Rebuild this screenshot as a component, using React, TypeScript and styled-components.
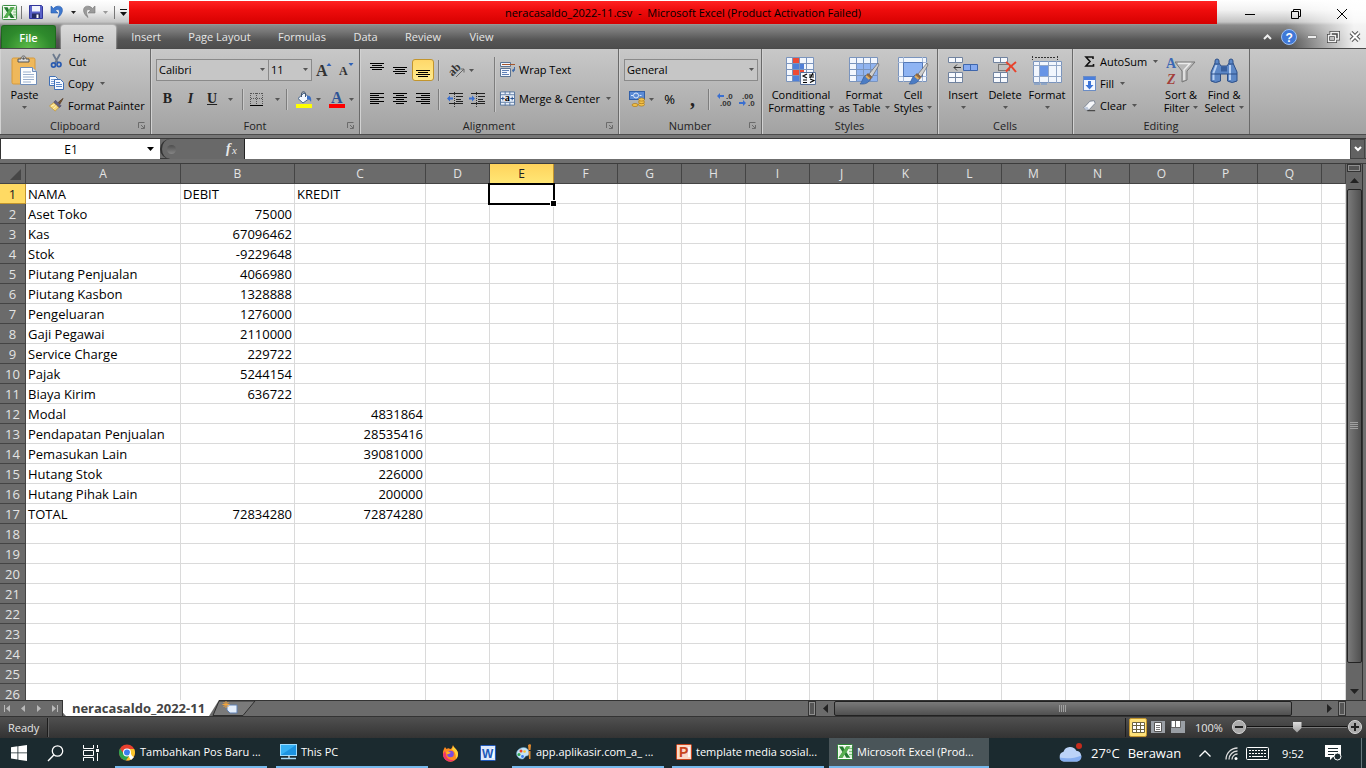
import React from "react";
import styled, { createGlobalStyle, css } from "styled-components";

const UI = `"Open Sans", "Noto Sans", sans-serif`;

const Global = createGlobalStyle`
  * { box-sizing: border-box; }
  body { margin: 0; background: #1b2a2f; }
  button, input, select { font: inherit; color: inherit; margin: 0; }
  button { border: 0; padding: 0; background: none; white-space: nowrap; }
  svg { display: block; flex: none; overflow: visible; }
`;

const Shell = styled.div`
  display: flex;
  flex-direction: column;
  height: 100vh;
  font: 11px/13px ${UI};
  color: #000;
  overflow: hidden;
`;

/* ---------- window header ---------- */

const Header = styled.header`
  flex: none;
  background:
    linear-gradient(to right, rgba(255, 255, 255, 0) calc(100% - 80px), rgba(255, 255, 255, 0.9) calc(100% - 12px)),
    linear-gradient(#fff 0, #f2f2f2 10px, #c4c4c4 22px, #8c8c8c 25px, #747474 32px, #555 40px, #4d4d4d 48px);
`;

const TitleBar = styled.div`
  display: flex;
  align-items: center;
  height: 24px;
`;

const QuickAccess = styled.div`
  display: flex;
  align-items: center;
  width: 129px;
  height: 24px;
  padding-left: 2px;
`;

const QuickButton = styled.button<{ $w: number }>`
  display: flex;
  align-items: center;
  justify-content: center;
  width: ${(p) => p.$w}px;
  height: 22px;
`;

const QuickRule = styled.span`
  width: 1px;
  height: 13px;
  margin: 0 4px;
  background: #777;
`;

const Caption = styled.h1`
  flex: 1;
  align-self: flex-end;
  margin: 0;
  height: 23px;
  padding-left: 20px;
  font-size: 11px;
  line-height: 24px;
  font-weight: 400;
  text-align: center;
  white-space: pre;
  background: linear-gradient(#ff2222, #ee0c0c 40%, #d60000);
`;

const WindowButtons = styled.div`
  display: flex;
  width: 149px;
  padding-left: 10px;
`;

const WindowButton = styled.button`
  display: flex;
  align-items: center;
  justify-content: center;
  width: 46px;
  height: 24px;
  padding-top: 4px;
`;

const TabRow = styled.div`
  display: flex;
  align-items: flex-end;
  height: 25px;
  padding-left: 1px;
  border-bottom: 1px solid #4a4a4a;
`;

const FileTab = styled.button`
  width: 55px;
  height: 23px;
  margin-right: 5px;
  border: 1px solid #1d6a1d;
  border-bottom: 0;
  border-radius: 3px 3px 0 0;
  color: #fff;
  font-weight: 600;
  background: radial-gradient(ellipse at 50% 100%, #5cbb48, #2e8a2c 60%, #277a28);
`;

const Tab = styled.button<{ $active?: boolean; $w: number }>`
  width: ${(p) => p.$w}px;
  height: 23px;
  color: #e6e6e6;
  ${(p) =>
    p.$active &&
    css`
      height: 24px;
      margin-bottom: -1px;
      color: #000;
      background: linear-gradient(#dadada, #c6c6c6);
      border-radius: 3px 3px 0 0;
      box-shadow: 0 0 2px #fff;
    `}
`;

const HeaderTools = styled.div`
  display: flex;
  align-items: center;
  gap: 9px;
  height: 23px;
  margin-left: auto;
  padding-right: 5px;
`;

/* ---------- ribbon ---------- */

const Ribbon = styled.div`
  flex: none;
  display: flex;
  height: 86px;
  background: linear-gradient(#c8c8c8, #bdbdbd 30%, #a2a2a2);
  border-bottom: 1px solid #4c4c4c;
`;

const GroupBox = styled.section<{ $w: number }>`
  display: flex;
  flex-direction: column;
  width: ${(p) => p.$w}px;
  padding-top: 2px;
  border-right: 1px solid #6a6a6a;
  box-shadow: inset 1px 0 #d2d2d2;
`;

const GroupBody = styled.div<{ $pad?: number }>`
  display: flex;
  height: 66px;
  padding-left: ${(p) => p.$pad ?? 0}px;
`;

const GroupTitle = styled.div`
  display: grid;
  grid-template-columns: 18px 1fr 18px;
  align-items: center;
  justify-items: center;
  height: 17px;
  padding-bottom: 1px;
  color: #222;
`;

const Column = styled.div<{ $pad?: number }>`
  display: flex;
  flex-direction: column;
  padding-top: ${(p) => p.$pad ?? 0}px;
`;

const ToolRow = styled.div<{ $gapTop?: number; $pad?: number }>`
  display: flex;
  align-items: center;
  height: 22px;
  margin-top: ${(p) => p.$gapTop ?? 0}px;
  padding-left: ${(p) => p.$pad ?? 0}px;
`;

const Tool = styled.button<{ $w: number; $active?: boolean }>`
  display: flex;
  align-items: center;
  justify-content: center;
  gap: 4px;
  width: ${(p) => p.$w}px;
  height: 22px;
  ${(p) =>
    p.$active &&
    css`
      border: 1px solid #c2952d;
      border-radius: 3px;
      background: linear-gradient(#ffd86b, #ffe27a 50%, #ffea91);
    `}
`;

const LabelTool = styled.button`
  display: flex;
  align-items: center;
  gap: 3px;
  height: 22px;
  padding-bottom: 2px;
  & > svg:first-child { margin-right: 1px; }
`;

const BigTool = styled.button<{ $w: number }>`
  display: flex;
  flex-direction: column;
  align-items: center;
  width: ${(p) => p.$w}px;
  padding-top: 3px;
  line-height: 13px;
`;

const BigArt = styled.span`
  display: flex;
  align-items: center;
  height: 34px;
`;

const BigLine = styled.span`
  display: flex;
  align-items: center;
  justify-content: center;
  gap: 4px;
  height: 13px;
`;

const Rule = styled.span<{ $h: number; $m?: number }>`
  width: 2px;
  height: ${(p) => p.$h}px;
  margin: 0 ${(p) => p.$m ?? 4}px;
  border-left: 1px solid #7d7d7d;
  border-right: 1px solid #c9c9c9;
`;

const Combo = styled.label<{ $w: number }>`
  position: relative;
  width: ${(p) => p.$w}px;
  height: 22px;
  margin-right: -1px;
  select {
    width: 100%;
    height: 22px;
    padding: 0 2px 2px;
    border: 1px solid #8a8a8a;
    border-radius: 0;
    background: #c6c6c6;
    appearance: none;
  }
  svg {
    position: absolute;
    right: 4px;
    top: 9px;
    pointer-events: none;
  }
`;

const Glyph = styled.span<{ $size: number; $bold?: boolean; $italic?: boolean; $underline?: boolean }>`
  font: ${(p) => (p.$italic ? "italic" : "normal")} ${(p) => (p.$bold ? 700 : 400)} ${(p) => p.$size}px/16px
    "Liberation Serif", serif;
  color: #222;
  text-decoration: ${(p) => (p.$underline ? "underline" : "none")};
`;

const Percent = styled.span`
  font-size: 13px;
`;

/* ---------- formula bar ---------- */

const FormulaBar = styled.div`
  flex: none;
  display: flex;
  height: 29px;
  padding: 4px 1px 4px 0;
  background: #6b6b6b;
  border-bottom: 1px solid #3c3c3c;
  box-shadow: inset 0 3px #767676, inset 0 4px #3a3a3a, inset 0 -4px #6f6f6f, inset 0 -5px #3a3a3a;
`;

const NameBox = styled.label`
  display: flex;
  align-items: center;
  width: 160px;
  height: 20px;
  padding-right: 6px;
  background: #fff;
  border-left: 1px solid #333;
  input {
    width: 140px;
    border: 0;
    outline: 0;
    padding: 1px 0 0;
    text-align: center;
    font: 12px/18px ${UI};
    background: none;
  }
  svg { margin-left: auto; }
`;

const FunctionZone = styled.div`
  display: flex;
  align-items: center;
  justify-content: space-between;
  width: 84px;
  height: 20px;
  padding: 0 6px 0 5px;
  border-left: 2px solid #333;
  border-radius: 10px 0 0 10px;
  background: #696969;
`;

const Knob = styled.span`
  width: 9px;
  height: 9px;
  border-radius: 50%;
  background: linear-gradient(#4e4e4e, #858585);
`;

const FormulaInput = styled.input`
  flex: 1;
  min-width: 0;
  height: 20px;
  border: 0;
  border-left: 1px solid #222;
  outline: 0;
  background: #fff;
`;

const Expand = styled.button`
  display: flex;
  align-items: center;
  justify-content: center;
  width: 15px;
  height: 20px;
  border: 1px solid #444;
  background: #626262;
`;

/* ---------- sheet ---------- */

const SheetArea = styled.main`
  flex: 1;
  display: flex;
  min-height: 0;
  background: #6b6b6b;
`;

const GridPane = styled.div`
  flex: 1;
  min-width: 0;
  overflow: hidden;
  background: #fff;
`;

const Grid = styled.table`
  width: 100%;
  table-layout: fixed;
  border-collapse: separate;
  border-spacing: 0;
  font: 13px/19px ${UI};
`;

const Corner = styled.th`
  height: 20px;
  padding: 0 4px 3px 0;
  background: #6b6b6b;
  border-right: 1px solid #444;
  border-bottom: 1px solid #444;
  vertical-align: bottom;
  svg { margin-left: auto; }
`;

const ColHead = styled.th<{ $active?: boolean }>`
  height: 20px;
  padding: 1px 0 0;
  font-size: 12px;
  line-height: 18px;
  font-weight: 400;
  color: ${(p) => (p.$active ? "#222" : "#e4e4e4")};
  background: ${(p) => (p.$active ? "linear-gradient(#ffd35c, #ffe675)" : "#6b6b6b")};
  border-right: 1px solid ${(p) => (p.$active ? "#c2952d" : "#444")};
  border-bottom: 1px solid ${(p) => (p.$active ? "#c2952d" : "#444")};
`;

const RowHead = styled.th<{ $active?: boolean }>`
  height: 20px;
  padding: 1px 0 0;
  font-weight: 400;
  line-height: 18px;
  color: ${(p) => (p.$active ? "#222" : "#e4e4e4")};
  background: ${(p) => (p.$active ? "#ffda63" : "#6b6b6b")};
  border-right: 1px solid ${(p) => (p.$active ? "#c2952d" : "#444")};
  border-bottom: 1px solid ${(p) => (p.$active ? "#c2952d" : "#444")};
`;

const Cell = styled.td<{ $num?: boolean }>`
  position: relative;
  height: 20px;
  padding: 1px 2px 0;
  line-height: 18px;
  text-align: ${(p) => (p.$num ? "right" : "left")};
  white-space: nowrap;
  border-right: 1px solid #dadada;
  border-bottom: 1px solid #dadada;
`;

const Cursor = styled.span`
  position: absolute;
  z-index: 1;
  inset: -1px -2px -2px -2px;
  border: 2px solid #000;
  &::after {
    content: "";
    position: absolute;
    right: -3px;
    bottom: -3px;
    width: 5px;
    height: 5px;
    background: #000;
    box-shadow: 0 0 0 1px #fff;
  }
`;

const VScroll = styled.div`
  display: flex;
  flex-direction: column;
  align-items: center;
  width: 20px;
  background: linear-gradient(to right, #666 16px, #333 16px, #333 17px, #6f6f6f 17px);
  padding-right: 4px;
`;

const SplitHandle = styled.span<{ $vertical?: boolean }>`
  flex: none;
  width: ${(p) => (p.$vertical ? 8 : 14)}px;
  height: ${(p) => (p.$vertical ? 15 : 8)}px;
  border: 2px solid #8f8f8f;
  outline: 1px solid #333;
  outline-offset: -1px;
  background: #555;
`;

const ScrollStep = styled.button<{ $vertical?: boolean }>`
  flex: none;
  display: flex;
  align-items: center;
  justify-content: center;
  width: ${(p) => (p.$vertical ? 16 : 18)}px;
  height: 17px;
`;

const VThumb = styled.div`
  flex: 474 1 0;
  display: flex;
  align-items: center;
  justify-content: center;
  width: 15px;
  border: 1px solid #222;
  border-radius: 2px;
  background: linear-gradient(to right, #7a7a7a, #505050);
`;

const Spacer = styled.span<{ $grow: number }>`
  flex: ${(p) => p.$grow} 1 0;
`;

const SheetBar = styled.div`
  flex: none;
  display: flex;
  height: 17px;
  background: #6b6b6b;
  border-top: 1px solid #333;
  border-bottom: 1px solid #333;
  padding-right: 20px;
`;

const SheetTabs = styled.nav`
  flex: 808 1 0;
  display: flex;
  align-items: flex-start;
`;

const SheetNav = styled.div`
  display: flex;
  align-items: center;
  justify-content: space-around;
  width: 63px;
  height: 15px;
  border-right: 1px solid #333;
`;

const SheetTab = styled.button`
  position: relative;
  z-index: 1;
  width: 156px;
  height: 16px;
  margin-top: -1px;
  padding: 0 6px 0 1px;
  font-weight: 700;
  font-size: 13px;
  line-height: 16px;
  color: #444;
  background: #fff;
  clip-path: polygon(0 0, 100% 0, 146px 100%, 3px 100%, 0 80%);
`;

const HScroll = styled.div`
  flex: 538 1 0;
  display: flex;
  align-items: center;
`;

const HThumb = styled.div`
  flex: 459 1 0;
  display: flex;
  align-items: center;
  justify-content: center;
  height: 15px;
  border: 1px solid #222;
  border-radius: 2px;
  background: linear-gradient(#7a7a7a, #505050);
`;

/* ---------- status bar ---------- */

const StatusBar = styled.footer`
  flex: none;
  display: flex;
  align-items: center;
  height: 21px;
  padding: 0 3px 1px 8px;
  color: #e4e4e4;
  background: linear-gradient(#505050, #333);
`;

const Notch = styled.span`
  width: 2px;
  height: 19px;
  margin-left: 8px;
  background: #1c1c1c;
  border-right: 1px solid #606060;
`;

const ViewButtons = styled.div`
  display: flex;
  align-items: center;
  gap: 2px;
  margin-left: auto;
  padding: 0 8px 0 3px;
  border-left: 1px solid #1c1c1c;
`;

const ViewButton = styled.button<{ $active?: boolean }>`
  display: flex;
  align-items: center;
  justify-content: center;
  width: 18px;
  height: 19px;
  border-radius: 2px;
  ${(p) => p.$active && css`border: 1px solid #c2952d; background: #ffe27a;`}
`;

const ZoomValue = styled.span`
  width: 36px;
`;

const ZoomRange = styled.input`
  width: 100px;
  height: 14px;
  appearance: none;
  background: linear-gradient(transparent 6px, #111 6px, #111 7px, #777 7px, #777 8px, transparent 8px);
  &::-webkit-slider-thumb {
    appearance: none;
    width: 9px;
    height: 11px;
    background: linear-gradient(#ddd, #999);
    clip-path: polygon(0 0, 100% 0, 100% 60%, 50% 100%, 0 60%);
  }
`;

/* ---------- taskbar ---------- */

const Taskbar = styled.nav`
  flex: none;
  display: flex;
  height: 30px;
  padding-left: 1px;
  color: #fff;
  background: #1b2a2f;
`;

const TaskIcon = styled.button<{ $w: number }>`
  display: flex;
  align-items: center;
  justify-content: center;
  width: ${(p) => p.$w}px;
  height: 30px;
`;

const TaskGap = styled.span`
  width: 6px;
`;

const TaskButton = styled.button<{ $w: number; $gap?: number; $active?: boolean }>`
  display: flex;
  align-items: center;
  gap: 4px;
  width: ${(p) => p.$w}px;
  height: 30px;
  margin-right: ${(p) => p.$gap ?? 0}px;
  padding-left: ${(p) => (p.$active ? 8 : 4)}px;
  border-bottom: 2px solid #76b9ed;
  background: ${(p) => (p.$active ? "#4a5559" : "none")};
  line-height: 28px;
`;

const Tray = styled.div`
  display: flex;
  align-items: center;
  margin-left: auto;
  padding-right: 4px;
`;

const TrayButton = styled.button<{ $w: number; $big?: boolean }>`
  display: flex;
  align-items: center;
  justify-content: ${(p) => (p.$big ? "flex-start" : "center")};
  gap: 8px;
  width: ${(p) => p.$w}px;
  height: 30px;
  font-size: ${(p) => (p.$big ? 13 : 11)}px;
`;

const TrayEdge = styled.span`
  width: 1px;
  height: 30px;
  background: #66777c;
`;

/* ---------- drawings ---------- */

const Arrow = ({ color = "#555", size = 5 }: { color?: string; size?: number }) => (
  <svg width={size} height={size === 5 ? 3 : 4} viewBox="0 0 6 3" preserveAspectRatio="none">
    <path d="M0 0H6L3 3Z" fill={color} />
  </svg>
);

const ExcelIcon = ({ size = 16 }: { size?: number }) => (
  <svg width={size} height={size} viewBox="0 0 16 16">
    <rect x=".5" y=".5" width="15" height="15" rx="1" fill="#fff" stroke="#2c8534" />
    <path d="M12 2h3v12h-3z" fill="#d9efd6" />
    <path d="M12 4.500h3M12 7.500h3M12 10.500h3" stroke="#67b468" strokeWidth=".8" />
    <path d="M1.500 2h10v12h-10z" fill="#e4f3df" />
    <path d="M2 2.500h4l1.500 3.200L9.200 2.500H13L9.300 8l3.900 5.800H9.300L7.300 10.200 5.400 13.800H1.600L5.500 8z" fill="#237a30" />
    <path d="M9.200 2.500H13L5.400 13.800H1.600z" fill="#57b04f" />
  </svg>
);

const SaveIcon = () => (
  <svg width="14" height="14" viewBox="0 0 14 14">
    <path d="M.5.500h12l1 1v12H.5z" fill="#5a62c8" stroke="#31369a" />
    <path d="M3 1h8v5.500H3z" fill="#f1f3fc" />
    <path d="M3 8.500h8V13H3z" fill="#262c63" />
    <path d="M7.500 9.500h2V13h-2z" fill="#fff" />
  </svg>
);

const UndoIcon = ({ flip }: { flip?: boolean }) => (
  <svg width="14" height="14" viewBox="0 0 14 14">
    <g transform={flip ? "translate(14 0) scale(-1 1)" : undefined}>
      <path d="M1 1v7h7L5.500 5.500C9 3 11 6 8 12.500 15 7 13 0 7 1.300 5.500 1.700 4.500 2.300 3.600 3.400z" fill={flip ? "#9a9a9a" : "#3d78cf"} stroke={flip ? "#777" : "#2558a8"} strokeWidth=".6" />
    </g>
  </svg>
);

const PasteIcon = () => (
  <svg width="28" height="32" viewBox="0 0 28 32">
    <rect x="1" y="3" width="23" height="26" rx="1.500" fill="#efb85b" stroke="#d79a3a" />
    <path d="M7 7V4h3c0-4 5-4 5 0h3v3z" fill="#ddd" stroke="#555" />
    <circle cx="12.500" cy="3.500" r="1.200" fill="#555" />
    <path d="M9.500 12.500h12l4 4v13h-16z" fill="#fdfeff" stroke="#6f8db8" />
    <path d="M21.500 12.500v4h4" fill="#d5e1f2" stroke="#6f8db8" />
    <path d="M12 17h8M12 19.500h11M12 22h11M12 24.500h11M12 27h8" stroke="#9bb0ce" />
  </svg>
);

const CutIcon = () => (
  <svg width="13" height="14" viewBox="0 0 13 14">
    <path d="M4 0L9 9M11 0L6 9" stroke="#6c7a8e" strokeWidth="1.800" />
    <ellipse cx="4.500" cy="11" rx="2" ry="2.200" fill="none" stroke="#2a5bb0" strokeWidth="1.700" />
    <ellipse cx="10" cy="10.500" rx="2" ry="2.200" fill="none" stroke="#2a5bb0" strokeWidth="1.700" />
  </svg>
);

const CopyIcon = () => (
  <svg width="15" height="14" viewBox="0 0 15 14">
    <path d="M.5.500h6l2 2v7h-8z" fill="#f6f9ff" stroke="#3f6fb5" />
    <path d="M2 3.500h4M2 5.500h5M2 7.500h4" stroke="#7da0d6" />
    <path d="M5.500 3.500h6l3 3v7h-9z" fill="#f6f9ff" stroke="#3f6fb5" />
    <path d="M7 6.500h4M7 8.500h6M7 10.500h6" stroke="#5c87c8" />
  </svg>
);

const PainterIcon = () => (
  <svg width="15" height="14" viewBox="0 0 16 14">
    <path d="M15 0l-5 4 1.500 2z" fill="#7d532b" stroke="#5f4630" />
    <path d="M7 2l6 6-2.500 2L5 4z" fill="#625f80" stroke="#454262" strokeWidth=".6" />
    <path d="M5 4.500L.5 8l6 5.500 4-3.800z" fill="#f4d578" stroke="#bd9030" strokeWidth=".7" />
    <path d="M2 8.500l4-2M4.500 11l3.500-3" stroke="#fff3c2" />
  </svg>
);

const Launcher = () => (
  <svg width="7" height="7" viewBox="0 0 7 7">
    <path d="M.5 6V.500h6M3 3l3 3M6.500 3v3.500H3" fill="none" stroke="#6b6b6b" />
  </svg>
);

const GrowShrink = ({ down }: { down?: boolean }) => (
  <svg width="15" height="17" viewBox="0 0 15 17">
    <text x="0" y={down ? 13 : 14} fontFamily="Liberation Serif, serif" fontWeight="700" fontSize={down ? 12 : 16} fill="#333">A</text>
    <path d={down ? "M9.500 1h5l-2.500 3z" : "M10.500 4h5L13 1z"} fill="#2e62b8" />
  </svg>
);

const BorderIcon = () => (
  <svg width="14" height="14" viewBox="0 0 14 14">
    <path d="M.5 1v12M6.500 1v12M12.500 1v12M1 1.500h12M1 6.500h12" stroke="#555" strokeDasharray="1 1" />
    <path d="M0 13.500h13" stroke="#000" />
  </svg>
);

const FillIcon = () => (
  <svg width="16" height="17" viewBox="0 0 16 17">
    <path d="M2 7.500L8 2l6 5-7 5z" fill="#f3f8ff" stroke="#47678f" />
    <path d="M5.500 6V3c0-3 4-3 4 0v3" fill="none" stroke="#44566e" />
    <path d="M11 5c3-1 5 2 4 6-1-2-2-3-4-3z" fill="#3a6fc4" />
    <rect y="13" width="16" height="4" fill="#ff0" />
  </svg>
);

const FontColorIcon = () => (
  <svg width="16" height="17" viewBox="0 0 16 17">
    <text x="2" y="12" fontFamily="Liberation Serif, serif" fontWeight="700" fontSize="16" fill="#2c5396">A</text>
    <rect y="13" width="16" height="4" fill="#f00" />
  </svg>
);

const Lines = ({ rows, top = 0 }: { rows: [number, number][]; top?: number }) => (
  <svg width="15" height="15" viewBox="0 0 15 15">
    {rows.map(([x, w], i) => (
      <rect key={i} x={x} y={top + i * 2 + (rows.length > 4 ? 1 : 0)} width={w} height="1" fill="#000" />
    ))}
  </svg>
);

const OrientIcon = () => (
  <svg width="15" height="15" viewBox="0 0 15 15">
    <text x="-1" y="11" transform="rotate(-45 4 8)" fontFamily="Liberation Serif, serif" fontWeight="700" fontSize="12" fill="#333">ab</text>
    <path d="M6 14L14 6M10.500 6H14v3.500" fill="none" stroke="#666" />
  </svg>
);

const IndentIcon = ({ right }: { right?: boolean }) => (
  <svg width="16" height="15" viewBox="0 0 16 15">
    <path d="M2 1.500h14M9 4.500h7M9 7.500h5M9 9.500h7M2 11.500h14" stroke="#222" />
    <path d="M7.500 0v15" stroke="#333" strokeDasharray="1 1" />
    <path d={right ? "M6 6.500L3 3.500v2H0v2h3v2z" : "M0 6.500l3-3v2h3v2H3v2z"} fill="#3a6fd0" />
  </svg>
);

const WrapIcon = () => (
  <svg width="15" height="15" viewBox="0 0 15 15">
    <path d="M.5.500h10v4H.5zM.5 6.500h10v8H.5z" fill="#f2f6fd" stroke="#5b7392" />
    <path d="M2 2.500h13" stroke="#a5562c" />
    <path d="M2 8.500h7M2 10.500h5M2 12.500h7" stroke="#5e7fb5" />
    <path d="M14.500 5v3.500h-2M14 7l-2 1.500 2 1.500" fill="none" stroke="#416ba8" />
  </svg>
);

const MergeIcon = () => (
  <svg width="15" height="15" viewBox="0 0 16 15">
    <path d="M.5.500h15v14H.5z" fill="#edf3fc" stroke="#54749f" />
    <path d="M0 3.500h16M0 11.500h16M5.500 0v3M10.500 0v3M5.500 12v3M10.500 12v3" stroke="#54749f" />
    <path d="M1 7.500h4M3 5.500v4M11 7.500h4M13 5.500v4" stroke="#234d8c" />
    <text x="5" y="10" fontFamily="Liberation Serif, serif" fontWeight="700" fontSize="11">a</text>
  </svg>
);

const CurrencyIcon = () => (
  <svg width="16" height="16" viewBox="0 0 16 16">
    <rect x=".5" y=".5" width="15" height="8" fill="#5b8bd5" stroke="#3260a8" />
    <circle cx="7" cy="4.500" r="2.500" fill="none" stroke="#dce9fb" />
    <path d="M2 4.500h2M10.500 4.500h2" stroke="#dce9fb" />
    <g fill="#f3c24c" stroke="#a87516" strokeWidth=".7">
      <ellipse cx="12.500" cy="13.500" rx="3" ry="1.600" />
      <ellipse cx="12.500" cy="11" rx="3" ry="1.600" />
      <ellipse cx="12.500" cy="8.500" rx="3" ry="1.600" />
      <ellipse cx="6" cy="14" rx="3" ry="1.500" />
    </g>
  </svg>
);

const DecimalIcon = ({ less }: { less?: boolean }) => (
  <svg width="16" height="15" viewBox="0 0 16 15">
    <g fontFamily="Liberation Sans, sans-serif" fontSize="8" fontWeight="700" fill="#333">
      <text x={less ? 3 : 9} y="7">{less ? ".00" : ".0"}</text>
      <text x={less ? 9 : 3} y="14">{less ? ".0" : ".00"}</text>
    </g>
    <path d={less ? "M7 11L4 8v2H0v2h4v2z" : "M0 4l3-3v2h4v2H3v2z"} fill="#3a6fd0" />
  </svg>
);

const Brush = () => (
  <g>
    <path d="M30 7L21 18l3 3 7-12z" fill="#cfcfcf" stroke="#666" strokeWidth=".7" />
    <path d="M20 17.500l4 4-2 2-4-4z" fill="#9b6b3a" stroke="#6a4522" strokeWidth=".6" />
    <path d="M17.500 19.500l4.500 4c-1.500 4-6 5-10 4.500 2.500-2 2-6 5.500-8.500z" fill="#4b7cc4" stroke="#2d5798" strokeWidth=".6" />
    <path d="M18 20l3.500 3" stroke="#dcae68" strokeWidth="2" />
  </g>
);

const CondIcon = () => (
  <svg width="32" height="30" viewBox="0 0 32 30">
    <path d="M1.500 1.500h27v24h-27z" fill="#f2f6fd" stroke="#7a94bd" />
    <path d="M8 2h6v6H8zM8 14h11v6H8z" fill="#ee4a35" />
    <path d="M8 8h11v6H8zM8 20h6v5H8z" fill="#4f7fd8" />
    <path d="M7.500 1v25M14.500 1v25M21.500 1v25M1 7.500h28M1 13.500h28M1 19.500h28" stroke="#7a94bd" />
    <path d="M15.500 16.500h15v12h-15z" fill="#f7f9fc" stroke="#58719a" />
    <path d="M22 18l-4 2 4 2M18 24h4M18 26.500h4M24 19h5M24 21h5M28 17l-3 5M25 23l4 1.500-4 2" fill="none" stroke="#000" strokeWidth="1.100" />
  </svg>
);

const TableIcon = () => (
  <svg width="32" height="30" viewBox="0 0 32 30">
    <path d="M1.500 1.500h28v24h-28z" fill="#f2f6fd" stroke="#7a94bd" />
    <path d="M8 8h21v17H8z" fill="#91b4f0" />
    <path d="M8.500 1v25M15.500 1v25M22.500 1v25M1 7.500h29M1 13.500h29M1 19.500h29" stroke="#7a94bd" />
    <Brush />
  </svg>
);

const CellStyleIcon = () => (
  <svg width="32" height="30" viewBox="0 0 32 30">
    <path d="M1.500 1.500h28v24h-28z" fill="#f2f6fd" stroke="#7a94bd" />
    <path d="M6.500 1v25M25.500 1v25M1 6.500h29M1 20.500h29" stroke="#a5b8d6" />
    <path d="M6.500 6.500h19v14h-19z" fill="#8fb4f3" stroke="#5479b8" />
    <Brush />
  </svg>
);

const CellBlocks = () => (
  <path d="M1.500 1.500h14v5h-14zM8.500 1.500v5M1.500 16.500h14v10h-14zM8.500 16.500v10M1.500 21.500h14" fill="#f7f9fd" stroke="#71839f" />
);

const InsertIcon = () => (
  <svg width="32" height="30" viewBox="0 0 32 30">
    <CellBlocks />
    <path d="M16.500 8.500h14v6h-14zM23.500 8.500v6" fill="#86aaf0" stroke="#3e66ac" />
    <path d="M7 11.500h7M10 8.500l-3 3 3 3" fill="none" stroke="#333" />
  </svg>
);

const DeleteIcon = () => (
  <svg width="32" height="30" viewBox="0 0 32 30">
    <g transform="translate(3 0)"><CellBlocks /></g>
    <path d="M9.500 8.500h11v6h-11z" fill="none" stroke="#333" strokeDasharray="1 1" />
    <path d="M17 6c3 2 7 6 10 10M27 6c-4 3-7 6-10 9.500" fill="none" stroke="#e8432c" strokeWidth="2" />
  </svg>
);

const FormatIcon = () => (
  <svg width="32" height="30" viewBox="0 0 32 30">
    <path d="M1.500 0v4M26.500 0v4M4 1.500h20" stroke="#333" strokeDasharray="2 1" />
    <path d="M2.500 5.500h28v21h-28z" fill="#f2f6fd" stroke="#7a94bd" />
    <path d="M8.500 5v22M17.500 5v22M25.500 5v22M2 9.500h29M2 20.500h29" stroke="#93a7c7" />
    <path d="M9 10h8v10H9z" fill="#6794e6" />
    <path d="M3 28h6M10 28h6" stroke="#8fa5c5" strokeWidth="2" />
  </svg>
);

const SigmaIcon = () => (
  <svg width="13" height="13" viewBox="0 0 13 13">
    <path d="M10 4V2H3l4 4.500L3 11h7.500V9" fill="none" stroke="#111" strokeWidth="1.600" />
  </svg>
);

const FillDownIcon = () => (
  <svg width="13" height="15" viewBox="0 0 13 15">
    <rect x=".5" y=".5" width="12" height="14" fill="#f4f8ff" stroke="#6b8cc4" />
    <path d="M1 1h11v3H1z" fill="#4b7fdc" />
    <path d="M5 5h3v4h2.500l-4 4.500L2.500 9H5z" fill="#3b74d8" />
  </svg>
);

const EraserIcon = () => (
  <svg width="13" height="13" viewBox="0 0 15 13">
    <path d="M8 1.500L13 1l1 3-7 7.500H3L1 9z" fill="#f6f7fa" stroke="#76808f" />
    <path d="M1 9l4-1 2 3.500H3z" fill="#bcc7da" />
    <path d="M5 12.500h9" stroke="#222" />
  </svg>
);

const SortIcon = () => (
  <svg width="30" height="30" viewBox="0 0 30 30">
    <text x="0" y="12" fontFamily="Liberation Serif, serif" fontWeight="700" fontSize="14" fill="#3c68b4">A</text>
    <text x="1" y="28" fontFamily="Liberation Serif, serif" fontWeight="700" fontStyle="italic" fontSize="14" fill="#a33e3a">Z</text>
    <path d="M9 6h20l-8 9v9l-5 2V15z" fill="#b9b9b9" stroke="#777" />
    <path d="M12 7.500h12l-6 6.500v10" fill="none" stroke="#ececec" strokeWidth="1.500" />
  </svg>
);

const FindIcon = () => (
  <svg width="28" height="28" viewBox="0 0 28 28">
    <path d="M5 4q0-2 2-2t2 2v2l2 3h6l2-3V4q0-2 2-2t2 2v2l4 9v9q-5 3-9.500 0v-7h-7v7q-5 3-9.500 0v-9L5 6z" fill="#5c87c6" stroke="#2d4f87" />
    <path d="M6.500 8l-3 8v7M20 8l0 8v7" stroke="#b8d0f2" strokeWidth="2" fill="none" />
    <path d="M1 17h9.500M17.500 17H27M4.500 7H9M19 7h4.500" stroke="#2d4f87" />
    <path d="M11 9.500h6v5h-6z" fill="#385f9e" />
  </svg>
);

const StepIcon = ({ d }: { d: string }) => (
  <svg width="10" height="9" viewBox="0 0 10 9">
    <path d={d} fill="#b9b9b9" />
  </svg>
);

const ChromeIcon = () => (
  <svg width="17" height="17" viewBox="0 0 17 17">
    <circle cx="8" cy="8.500" r="8" fill="#e8402f" />
    <path d="M1 4.500A8 8 0 0 0 7 16.400L11.500 10l-6 1z" fill="#2da44e" />
    <path d="M8 5h7.200A8 8 0 0 1 7 16.400L11.500 10z" fill="#fbc62c" />
    <circle cx="8" cy="8.500" r="4" fill="#fff" />
    <circle cx="8" cy="8.500" r="3" fill="#3b7ded" />
    <path d="M11 8l2 4 2 1-3 3-2-3z" fill="#fff" />
  </svg>
);

const PcIcon = () => (
  <svg width="17" height="16" viewBox="0 0 17 16">
    <rect x=".5" y=".5" width="16" height="11" fill="#37b1f4" stroke="#9ddcff" />
    <path d="M1 11L16 1v10z" fill="#1c93e0" />
    <path d="M8 12h2v2H8z" fill="#aaa" />
    <path d="M1 14.500h15" stroke="#a7dcf8" strokeWidth="1.500" />
  </svg>
);

const FirefoxIcon = () => (
  <svg width="17" height="17" viewBox="0 0 17 17">
    <path d="M11 0c0 3 5 4 5 9a7.500 7.500 0 0 1-15 .5C.5 6 2 4 3 2l1.500 2C6 3 7 3 8 4c2 0 2-2 3-4z" fill="#ff8a1f" />
    <path d="M11 0c0 3 5 4 5 9 0 2-1 4-2 5 0-5-1-8-5-10 2 0 2-2 2-4z" fill="#ffd23a" />
    <path d="M1 9a7.500 7.500 0 0 0 12 6c-5 1-9-2-9-6L3 6z" fill="#f0356b" />
    <circle cx="8.500" cy="9" r="3.300" fill="#7a4be0" />
    <path d="M4 7c2-1 4 0 5 1-2 0-2 2-4 1z" fill="#ffae2c" />
  </svg>
);

const OfficeIcon = ({ letter, color, paper }: { letter: string; color: string; paper: string }) => (
  <svg width="16" height="16" viewBox="0 0 16 16">
    <rect x=".5" y=".5" width="15" height="15" rx="1" fill={paper} stroke={color} />
    <path d="M12 3h2v10h-2z" fill="#fff" opacity=".8" />
    <text x={letter === "W" ? 2 : 3} y="13" fontFamily="Liberation Sans, sans-serif" fontWeight="700" fontSize={letter === "W" ? 12 : 14} fill={color}>{letter}</text>
  </svg>
);

const PaintIcon = () => (
  <svg width="16" height="16" viewBox="0 0 16 16">
    <path d="M5 4c5-2 9 2 8 6-1 3-3 1-4 3s-3 3-6 1C-1 11 0 6 5 4z" fill="#c4e3f5" stroke="#5b9ec5" strokeWidth=".6" />
    <circle cx="5" cy="7" r="1.500" fill="#e8402f" />
    <circle cx="3" cy="10.500" r="1.500" fill="#2da44e" />
    <circle cx="6.500" cy="12.500" r="1.400" fill="#3b7ded" />
    <circle cx="8.500" cy="7.500" r="1.300" fill="#fbc62c" />
    <path d="M12 1l2-1 1 1-.5 5h-2zM12.500 7h2v8h-1.500z" fill="#e38b2e" />
  </svg>
);

/* ---------- data ---------- */

const columns: [string, number][] = [
  ["A", 155], ["B", 114], ["C", 131],
  ...("DEFGHIJKLMNOPQ".split("").map((c) => [c, 64]) as [string, number][]),
];

const rows: [string, string, string][] = [
  ["NAMA", "DEBIT", "KREDIT"],
  ["Aset Toko", "75000", ""],
  ["Kas", "67096462", ""],
  ["Stok", "-9229648", ""],
  ["Piutang Penjualan", "4066980", ""],
  ["Piutang Kasbon", "1328888", ""],
  ["Pengeluaran", "1276000", ""],
  ["Gaji Pegawai", "2110000", ""],
  ["Service Charge", "229722", ""],
  ["Pajak", "5244154", ""],
  ["Biaya Kirim", "636722", ""],
  ["Modal", "", "4831864"],
  ["Pendapatan Penjualan", "", "28535416"],
  ["Pemasukan Lain", "", "39081000"],
  ["Hutang Stok", "", "226000"],
  ["Hutang Pihak Lain", "", "200000"],
  ["TOTAL", "72834280", "72874280"],
];

const rowCount = 26;

const tabs: [string, number][] = [
  ["Home", 55], ["Insert", 60], ["Page Layout", 87], ["Formulas", 78],
  ["Data", 49], ["Review", 66], ["View", 51],
];

/* ---------- parts ---------- */

function Group({ title, w, pad, launcher, children }: {
  title: string; w: number; pad?: number; launcher?: boolean; children: React.ReactNode;
}) {
  return (
    <GroupBox $w={w} aria-label={title}>
      <GroupBody $pad={pad}>{children}</GroupBody>
      <GroupTitle>
        <span />
        <span>{title}</span>
        {launcher && <button aria-label={`${title} settings`}><Launcher /></button>}
      </GroupTitle>
    </GroupBox>
  );
}

function Big({ w, art, lines }: { w: number; art: React.ReactNode; lines: string[] }) {
  return (
    <BigTool $w={w}>
      <BigArt>{art}</BigArt>
      <BigLine>{lines[0]}</BigLine>
      <BigLine>{lines[1]}<Arrow /></BigLine>
    </BigTool>
  );
}

const RibbonBar = () => (
  <Ribbon>
    <Group title="Clipboard" w={151} launcher>
      <Big w={49} art={<PasteIcon />} lines={["Paste"]} />
      <Column>
        <LabelTool><CutIcon />&nbsp;Cut</LabelTool>
        <LabelTool><CopyIcon />Copy&nbsp;<Arrow /></LabelTool>
        <LabelTool><PainterIcon />Format Painter</LabelTool>
      </Column>
    </Group>

    <Group title="Font" w={209} pad={5} launcher>
      <Column $pad={8}>
        <ToolRow>
          <Combo $w={113}>
            <select aria-label="Font name"><option>Calibri</option></select><Arrow />
          </Combo>
          <Combo $w={44}>
            <select aria-label="Font size"><option>11</option></select><Arrow />
          </Combo>
          <Tool $w={24} aria-label="Grow font"><GrowShrink /></Tool>
          <Tool $w={22} aria-label="Shrink font"><GrowShrink down /></Tool>
        </ToolRow>
        <ToolRow $gapTop={7}>
          <Tool $w={23} aria-label="Bold"><Glyph $size={14} $bold>B</Glyph></Tool>
          <Tool $w={23} aria-label="Italic"><Glyph $size={14} $bold $italic>I</Glyph></Tool>
          <Tool $w={36} aria-label="Underline"><Glyph $size={14} $bold $underline>U</Glyph>&nbsp;<Arrow /></Tool>
          <Rule $h={21} />
          <Tool $w={34} aria-label="Borders"><BorderIcon />&nbsp;<Arrow /></Tool>
          <Rule $h={21} />
          <Tool $w={33} aria-label="Fill color"><FillIcon /><Arrow /></Tool>
          <Tool $w={33} aria-label="Font color"><FontColorIcon /><Arrow /></Tool>
        </ToolRow>
      </Column>
    </Group>

    <Group title="Alignment" w={259} pad={6} launcher>
      <Column $pad={8}>
        <ToolRow>
          <Tool $w={23} aria-label="Top align"><Lines top={0} rows={[[0, 14], [2, 10], [0, 14], [2, 10]]} /></Tool>
          <Tool $w={23} aria-label="Middle align"><Lines top={4} rows={[[0, 14], [2, 10], [0, 14], [2, 10]]} /></Tool>
          <Tool $w={22} $active aria-label="Bottom align"><Lines top={7} rows={[[0, 14], [2, 10], [0, 14], [2, 10]]} /></Tool>
          <Rule $h={21} />
          <Tool $w={36} aria-label="Orientation"><OrientIcon /><Arrow /></Tool>
        </ToolRow>
        <ToolRow $gapTop={7}>
          <Tool $w={23} aria-label="Align left"><Lines rows={[[0, 14], [0, 9], [0, 14], [0, 9], [0, 14], [0, 9]]} /></Tool>
          <Tool $w={23} aria-label="Center"><Lines rows={[[0, 14], [3, 8], [0, 14], [3, 8], [0, 14], [3, 8]]} /></Tool>
          <Tool $w={22} aria-label="Align right"><Lines rows={[[0, 14], [5, 9], [0, 14], [5, 9], [0, 14], [5, 9]]} /></Tool>
          <Rule $h={21} />
          <Tool $w={22} aria-label="Decrease indent"><IndentIcon /></Tool>
          <Tool $w={22} aria-label="Increase indent"><IndentIcon right /></Tool>
        </ToolRow>
      </Column>
      <ToolRow $gapTop={22} $pad={2}><Rule $h={55} /></ToolRow>
      <Column $pad={8}>
        <ToolRow><LabelTool><WrapIcon />Wrap Text</LabelTool></ToolRow>
        <ToolRow $gapTop={7}><LabelTool><MergeIcon />Merge &amp; Center&nbsp;<Arrow /></LabelTool></ToolRow>
      </Column>
    </Group>

    <Group title="Number" w={143} pad={5} launcher>
      <Column $pad={8}>
        <ToolRow>
          <Combo $w={134}>
            <select aria-label="Number format"><option>General</option></select><Arrow />
          </Combo>
        </ToolRow>
        <ToolRow $gapTop={7}>
          <Tool $w={34} aria-label="Accounting format"><CurrencyIcon /><Arrow /></Tool>
          <Tool $w={23} aria-label="Percent"><Percent>%</Percent></Tool>
          <Tool $w={23} aria-label="Comma style"><Glyph $size={20} $bold>,</Glyph></Tool>
          <Rule $h={21} />
          <Tool $w={22} aria-label="Increase decimal"><DecimalIcon /></Tool>
          <Tool $w={22} aria-label="Decrease decimal"><DecimalIcon less /></Tool>
        </ToolRow>
      </Column>
    </Group>

    <Group title="Styles" w={176} pad={4}>
      <Big w={70} art={<CondIcon />} lines={["Conditional", "Formatting"]} />
      <Big w={56} art={<TableIcon />} lines={["Format", "as Table"]} />
      <Big w={42} art={<CellStyleIcon />} lines={["Cell", "Styles"]} />
    </Group>

    <Group title="Cells" w={135} pad={4}>
      <Big w={42} art={<InsertIcon />} lines={["Insert"]} />
      <Big w={42} art={<DeleteIcon />} lines={["Delete"]} />
      <Big w={42} art={<FormatIcon />} lines={["Format"]} />
    </Group>

    <Group title="Editing" w={177} pad={10}>
      <Column>
        <LabelTool><SigmaIcon />AutoSum&nbsp;<Arrow /></LabelTool>
        <LabelTool><FillDownIcon />Fill&nbsp;<Arrow /></LabelTool>
        <LabelTool><EraserIcon />Clear&nbsp;<Arrow /></LabelTool>
      </Column>
      <Big w={46} art={<SortIcon />} lines={["Sort &", "Filter"]} />
      <Big w={40} art={<FindIcon />} lines={["Find &", "Select"]} />
    </Group>
  </Ribbon>
);

const Spreadsheet = () => (
  <GridPane>
    <Grid>
      <colgroup>
        <col width={26} />
        {columns.map(([c, w]) => <col key={c} width={w} />)}
        <col />
      </colgroup>
      <thead>
        <tr>
          <Corner aria-label="Select all">
            <svg width="11" height="11" viewBox="0 0 11 11"><path d="M11 0v11H0z" fill="#474747" /></svg>
          </Corner>
          {columns.map(([c]) => <ColHead key={c} $active={c === "E"} scope="col">{c}</ColHead>)}
          <ColHead />
        </tr>
      </thead>
      <tbody>
        {Array.from({ length: rowCount }, (_, r) => (
          <tr key={r}>
            <RowHead $active={r === 0} scope="row">{r + 1}</RowHead>
            {columns.map(([c], i) => (
              <Cell key={c} $num={r > 0 && i > 0}>
                {i < 3 ? rows[r]?.[i] : null}
                {r === 0 && c === "E" && <Cursor />}
              </Cell>
            ))}
            <Cell />
          </tr>
        ))}
      </tbody>
    </Grid>
  </GridPane>
);

export default function App() {
  return (
    <Shell>
      <Global />
      <Header>
        <TitleBar>
          <QuickAccess>
            <ExcelIcon size={15} />
            <QuickRule />
            <QuickButton $w={20} aria-label="Save"><SaveIcon /></QuickButton>
            <QuickButton $w={22} aria-label="Undo"><UndoIcon /></QuickButton>
            <QuickButton $w={10} aria-label="Undo history"><Arrow color="#222" /></QuickButton>
            <QuickButton $w={22} aria-label="Redo"><UndoIcon flip /></QuickButton>
            <QuickButton $w={10} aria-label="Redo history"><Arrow color="#999" /></QuickButton>
            <QuickRule />
            <QuickButton $w={8} aria-label="Customize toolbar">
              <svg width="7" height="7" viewBox="0 0 7 7"><path d="M0 0h7v1H0zM0 3h7L3.500 7z" fill="#111" /></svg>
            </QuickButton>
          </QuickAccess>
          <Caption>{"neracasaldo_2022-11.csv  -  Microsoft Excel (Product Activation Failed)"}</Caption>
          <WindowButtons>
            <WindowButton aria-label="Minimize"><svg width="10" height="10"><path d="M0 5.500h10" stroke="#000" /></svg></WindowButton>
            <WindowButton aria-label="Restore">
              <svg width="10" height="10"><path d="M.5 2.500h7v7h-7zM2.500 2.500v-2h7v7h-2" fill="none" stroke="#000" /></svg>
            </WindowButton>
            <WindowButton aria-label="Close"><svg width="10" height="10"><path d="M0 0l10 10M10 0L0 10" stroke="#000" /></svg></WindowButton>
          </WindowButtons>
        </TitleBar>
        <TabRow>
          <FileTab>File</FileTab>
          {tabs.map(([t, w], i) => <Tab key={t} $w={w} $active={i === 0}>{t}</Tab>)}
          <HeaderTools>
            <button aria-label="Collapse ribbon">
              <svg width="9" height="6"><path d="M1 5l3.500-3.500L8 5" fill="none" stroke="#eee" strokeWidth="2" /></svg>
            </button>
            <button aria-label="Help">
              <svg width="16" height="16" viewBox="0 0 16 16">
                <circle cx="8" cy="8" r="7.500" fill="#3f78d8" stroke="#9cc0f5" />
                <text x="4.500" y="12.500" fontFamily="Liberation Sans, sans-serif" fontWeight="700" fontSize="12" fill="#fff">?</text>
              </svg>
            </button>
            <button aria-label="Minimize workbook">
              <svg width="12" height="6"><path d="M1.500 1.500h9v3h-9z" fill="#eee" stroke="#888" /></svg>
            </button>
            <button aria-label="Restore workbook">
              <svg width="13" height="12"><path d="M4 4V1.500h7.500V8H9M1.500 4.500h7v6h-7z" fill="none" stroke="#444" strokeWidth="3" /><path d="M4 4V1.500h7.500V8H9M1.500 4.500h7v6h-7z" fill="none" stroke="#f2f2f2" strokeWidth="1.500" /></svg>
            </button>
            <button aria-label="Close workbook">
              <svg width="12" height="11"><path d="M2 1.500l8 8M10 1.500l-8 8" stroke="#555" strokeWidth="4" /><path d="M2 1.500l8 8M10 1.500l-8 8" stroke="#fff" strokeWidth="2" /></svg>
            </button>
          </HeaderTools>
        </TabRow>
      </Header>

      <RibbonBar />

      <FormulaBar>
        <NameBox>
          <input aria-label="Name box" defaultValue="E1" />
          <Arrow color="#000" size={7} />
        </NameBox>
        <FunctionZone>
          <Knob />
          <button aria-label="Insert function">
            <svg width="14" height="16" viewBox="0 0 14 16">
              <text x="2" y="12" fontFamily="Liberation Serif, serif" fontStyle="italic" fontWeight="700" fontSize="14" fill="#e8e8e8">f</text>
              <text x="8" y="13" fontFamily="Liberation Serif, serif" fontStyle="italic" fontSize="11" fill="#e8e8e8">x</text>
            </svg>
          </button>
        </FunctionZone>
        <FormulaInput aria-label="Formula" />
        <Expand aria-label="Expand formula bar">
          <svg width="8" height="6"><path d="M1 1l3 3 3-3" fill="none" stroke="#fff" strokeWidth="2" /></svg>
        </Expand>
      </FormulaBar>

      <SheetArea>
        <Spreadsheet />
        <VScroll>
          <SplitHandle />
          <ScrollStep $vertical aria-label="Scroll up"><svg width="9" height="5"><path d="M0 5h9L4.500 0z" fill="#222" /></svg></ScrollStep>
          <VThumb><svg width="8" height="8"><path d="M0 .500h8M0 2.500h8M0 4.500h8M0 6.500h8" stroke="#a0a0a0" /></svg></VThumb>
          <Spacer $grow={20} />
          <ScrollStep $vertical aria-label="Scroll down"><svg width="9" height="5"><path d="M0 0h9L4.500 5z" fill="#222" /></svg></ScrollStep>
        </VScroll>
      </SheetArea>

      <SheetBar>
        <SheetTabs>
          <SheetNav>
            <button aria-label="First sheet"><StepIcon d="M1 1h1v7H1zM7 1v7L3 4.500z" /></button>
            <button aria-label="Previous sheet"><StepIcon d="M7 1v7L3 4.500z" /></button>
            <button aria-label="Next sheet"><StepIcon d="M3 1v7l4-3.500z" /></button>
            <button aria-label="Last sheet"><StepIcon d="M8 1h1v7H8zM3 1v7l4-3.500z" /></button>
          </SheetNav>
          <SheetTab>neracasaldo_2022-11</SheetTab>
          <button aria-label="Insert sheet">
            <svg width="36" height="15" viewBox="0 0 36 15">
              <path d="M0 0h36L24 14.500H-6z" fill="#7a7a7a" stroke="#2e2e2e" />
              <path d="M8 4h10v8h-7l-3-3z" fill="#e4eefb" stroke="#6182b5" />
              <path d="M7 0v7M3.500 3.500h7M4.500 1l5 5M9.500 1l-5 5" stroke="#f2a33a" />
            </svg>
          </button>
        </SheetTabs>
        <HScroll>
          <SplitHandle $vertical />
          <ScrollStep aria-label="Scroll left"><svg width="5" height="9"><path d="M5 0v9L0 4.500z" fill="#222" /></svg></ScrollStep>
          <HThumb><svg width="8" height="7"><path d="M.5 0v7M2.500 0v7M4.500 0v7M6.500 0v7" stroke="#a0a0a0" /></svg></HThumb>
          <Spacer $grow={28} />
          <ScrollStep aria-label="Scroll right"><svg width="5" height="9"><path d="M0 0v9l5-4.500z" fill="#222" /></svg></ScrollStep>
          <SplitHandle $vertical />
        </HScroll>
      </SheetBar>

      <StatusBar>
        Ready
        <Notch />
        <ViewButtons>
          <ViewButton $active aria-label="Normal view">
            <svg width="13" height="11"><path d="M.5.500h12v10H.5zM4.500 0v11M8.500 0v11M0 3.500h13M0 7.500h13" fill="#fff" stroke="#6d6440" /></svg>
          </ViewButton>
          <ViewButton aria-label="Page layout view">
            <svg width="14" height="12"><path d="M0 0h14v12H0z" fill="#9a9fa5" /><path d="M3.500 1.500h7v9h-7z" fill="#fff" stroke="#555" /><path d="M5 4.500h4M5 6.500h4M5 8.500h4" stroke="#777" /></svg>
          </ViewButton>
          <ViewButton aria-label="Page break view">
            <svg width="14" height="12"><path d="M0 0h14v12H0z" fill="#9a9fa5" /><path d="M1 0h3v6H1zM5 0h4v6H5z" fill="#fff" /><path d="M4.500 0v6.500M9.500 0v6.500H0" fill="none" stroke="#666" /></svg>
          </ViewButton>
        </ViewButtons>
        <ZoomValue>100%</ZoomValue>
        <button aria-label="Zoom out">
          <svg width="16" height="16"><circle cx="8" cy="8" r="6.500" fill="#aaa" stroke="#d8d8d8" /><path d="M4 8h8" stroke="#222" strokeWidth="2" /></svg>
        </button>
        <ZoomRange type="range" aria-label="Zoom" defaultValue={50} />
        <button aria-label="Zoom in">
          <svg width="16" height="16"><circle cx="8" cy="8" r="6.500" fill="#aaa" stroke="#d8d8d8" /><path d="M4 8h8M8 4v8" stroke="#222" strokeWidth="2" /></svg>
        </button>
      </StatusBar>

      <Taskbar>
        <TaskIcon $w={36} aria-label="Start">
          <svg width="16" height="16" viewBox="0 0 16 16"><path d="M0 2.300l6.500-1v6.200H0zM7.300 1.200L16 0v7.500H7.300zM0 8.300h6.500v6.300l-6.500-1zM7.300 8.300H16V16l-8.700-1.300z" fill="#fff" /></svg>
        </TaskIcon>
        <TaskIcon $w={36} aria-label="Search">
          <svg width="17" height="17"><circle cx="10.500" cy="6" r="5.200" fill="none" stroke="#fff" strokeWidth="1.300" /><path d="M6.800 10L1 16" stroke="#fff" strokeWidth="1.400" /></svg>
        </TaskIcon>
        <TaskIcon $w={36} aria-label="Task view">
          <svg width="17" height="16"><path d="M.5 0v3.500h10V0M.5 16v-3.500h10V16M.5 5.500h10v5H.5zM14.500 0v3M14.500 8v8" fill="none" stroke="#fff" /><path d="M13 4h3v3h-3z" fill="#fff" /></svg>
        </TaskIcon>
        <TaskGap />
        <TaskButton $w={152} $gap={9}><ChromeIcon />Tambahkan Pos Baru ...</TaskButton>
        <TaskButton $w={152} $gap={4}><PcIcon />This PC</TaskButton>
        <TaskIcon $w={37} aria-label="Firefox"><FirefoxIcon /></TaskIcon>
        <TaskIcon $w={37} aria-label="Word"><OfficeIcon letter="W" color="#2057b8" paper="#dce8fb" /></TaskIcon>
        <TaskGap />
        <TaskButton $w={152} $gap={8}><PaintIcon />app.aplikasir.com_a_ ...</TaskButton>
        <TaskButton $w={152} $gap={5}><OfficeIcon letter="P" color="#c8441c" paper="#fbd9c8" />template media sosial...</TaskButton>
        <TaskButton $w={160} $active><ExcelIcon />Microsoft Excel (Prod...</TaskButton>
        <Tray>
          <TrayButton $w={133} $big>
            <svg width="25" height="20" viewBox="0 0 25 20">
              <path d="M6 18.500a5 5 0 0 1-.5-9.800 7 7 0 0 1 12.800-1A5.500 5.500 0 0 1 19 18.500z" fill="#bcd3f8" />
              <path d="M6 18.500a5 5 0 0 1-4.500-4c6 1.500 15 1 22-2a5.500 5.500 0 0 1-4.500 6z" fill="#86aef0" />
              <circle cx="21" cy="3" r="3" fill="#c42b1c" />
            </svg>
            <span>27°C</span>
            <span>Berawan</span>
          </TrayButton>
          <TrayButton $w={27} aria-label="Hidden icons"><svg width="12" height="7"><path d="M.5 6.500L6 1l5.500 5.500" fill="none" stroke="#fff" strokeWidth="1.300" /></svg></TrayButton>
          <TrayButton $w={26} aria-label="Network">
            <svg width="13" height="13"><path d="M1 12.500A11.500 11.500 0 0 1 12.500 1M4 12.500A8.500 8.500 0 0 1 12.500 4M7 12.500A5.500 5.500 0 0 1 12.500 7" fill="none" stroke="#ddd" strokeWidth="1.300" /><circle cx="11" cy="11.500" r="1.500" fill="#fff" /></svg>
          </TrayButton>
          <TrayButton $w={26} aria-label="Keyboard">
            <svg width="23" height="13"><rect x=".5" y=".5" width="22" height="12" rx="1" fill="none" stroke="#fff" /><path d="M3 3.500h17M3 6.500h17" stroke="#fff" strokeDasharray="2 1" /><path d="M3 9.500h2M6 9.500h11M18 9.500h2" stroke="#fff" /></svg>
          </TrayButton>
          <TrayButton $w={46}>9:52</TrayButton>
          <TrayButton $w={34} aria-label="Notifications">
            <svg width="17" height="16"><path d="M0 0h16v12H8l-3 3v-3H0z" fill="#fff" /><path d="M3 3.500h10M3 6.500h10M3 9.500h6" stroke="#1b2a2f" /><circle cx="12.500" cy="11.500" r="3.500" fill="#1b2a2f" stroke="#fff" /></svg>
          </TrayButton>
          <TrayButton $w={11} aria-label="Show desktop" />
          <TrayEdge />
        </Tray>
      </Taskbar>
    </Shell>
  );
}
